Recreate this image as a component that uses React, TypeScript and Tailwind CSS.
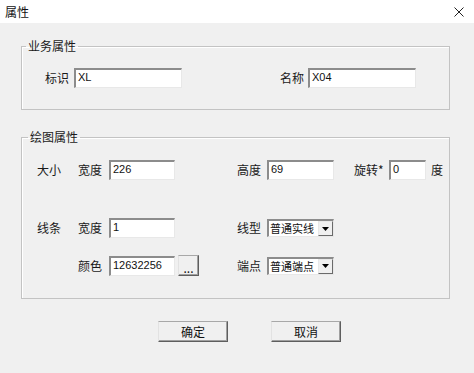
import React from "react";

const cjk = { fontFamily: '"Noto Sans CJK SC", "Microsoft YaHei", sans-serif' };
const lat = { fontFamily: '"Liberation Sans", Arial, sans-serif' };

function Label({ text, w }: { text: string; w: string }) {
  return (
    <div className={`${w} shrink-0 text-[12px] leading-[16px] text-[#1a1a1a]`} style={cjk}>
      {text}
    </div>
  );
}

function Input({ value, w, h = "h-[20px]" }: { value: string; w: string; h?: string }) {
  return (
    <div
      className={`${w} ${h} shrink-0 bg-white border-t-2 border-l-2 border-b border-r border-t-[#8c8c8c] border-l-[#8c8c8c] border-b-[#e8e8e8] border-r-[#e8e8e8] pl-[2px] text-[11px] leading-[15px] text-[#111]`}
      style={lat}
    >
      {value}
    </div>
  );
}

function Select({ value }: { value: string }) {
  return (
    <div className="w-[67px] h-[18px] shrink-0 flex bg-white border-t-2 border-l-2 border-b border-r border-t-[#8c8c8c] border-l-[#8c8c8c] border-b-[#e8e8e8] border-r-[#e8e8e8]">
      <div className="flex-1 min-w-0 pl-[1px] text-[11px] leading-[14px] text-[#111] whitespace-nowrap" style={cjk}>
        {value}
      </div>
      <div className="w-[15px] shrink-0 h-full bg-[#f0f0f0] border-t border-l border-t-[#e8e8e8] border-l-[#e8e8e8] border-b border-r border-b-[#6a6a6a] border-r-[#6a6a6a] flex items-center justify-center">
        <svg width="7" height="4" viewBox="0 0 7 4">
          <path d="M0 0 H7 L3.5 4 Z" fill="#000" />
        </svg>
      </div>
    </div>
  );
}

function Btn({ text, w, h, cls = "" }: { text: string; w: string; h: string; cls?: string }) {
  return (
    <div
      className={`${w} ${h} shrink-0 bg-[#f0f0f0] border border-t-[#a8a8a8] border-l-[#e2e2e2] border-b-[#5e5e5e] border-r-[#5e5e5e] shadow-[inset_-1px_-1px_0_#a0a0a0] flex items-center justify-center text-[12px] text-[#111] ${cls}`}
      style={cjk}
    >
      {text}
    </div>
  );
}

export default function App() {
  return (
    <div className="w-[474px] h-[373px] bg-[#f0f0f0] flex flex-col overflow-hidden">
      {/* title bar */}
      <div className="h-[23px] bg-white flex items-center justify-between pl-[5px] pr-[10px]">
        <div className="text-[12px] leading-[16px] text-[#111]" style={cjk}>
          属性
        </div>
        <svg width="10" height="10" viewBox="0 0 10 10">
          <path d="M0.5 0.5 L9.5 9.5 M9.5 0.5 L0.5 9.5" stroke="#222" strokeWidth="1" />
        </svg>
      </div>

      {/* group 1 */}
      <fieldset className="ml-[21px] mt-[15px] w-[429px] border border-[#c3c3c3] shadow-[inset_1px_1px_0_#ffffff]">
        <legend className="ml-[4px] px-[2px] text-[12px] leading-[16px] text-[#1a1a1a]" style={cjk}>
          业务属性
        </legend>
        <div className="mt-[14px] mb-[21px] pl-[23px] flex items-center h-[20px]">
          <Label text="标识" w="w-[29px]" />
          <Input value="XL" w="w-[108px]" />
          <div className="w-[98px] shrink-0" />
          <Label text="名称" w="w-[28px]" />
          <Input value="X04" w="w-[108px]" />
        </div>
      </fieldset>

      {/* group 2 */}
      <fieldset className="ml-[21px] mt-[19px] w-[429px] border border-[#c3c3c3] shadow-[inset_1px_1px_0_#ffffff]">
        <legend className="ml-[6px] px-[2px] text-[12px] leading-[16px] text-[#1a1a1a]" style={cjk}>
          绘图属性
        </legend>
        <div className="mt-[15px] pl-[15px] flex flex-col">
          <div className="h-[20px] flex items-center">
            <Label text="大小" w="w-[41px]" />
            <Label text="宽度" w="w-[31px]" />
            <Input value="226" w="w-[66px]" />
            <div className="w-[62px] shrink-0" />
            <Label text="高度" w="w-[30px]" />
            <Input value="69" w="w-[67px]" />
            <div className="w-[20px] shrink-0" />
            <Label text="旋转*" w="w-[35px]" />
            <Input value="0" w="w-[37px]" />
            <div className="ml-[5px]">
              <Label text="度" w="w-[14px]" />
            </div>
          </div>
          <div className="h-[20px] mt-[38px] flex items-center">
            <Label text="线条" w="w-[41px]" />
            <Label text="宽度" w="w-[31px]" />
            <Input value="1" w="w-[66px]" />
            <div className="w-[62px] shrink-0" />
            <Label text="线型" w="w-[30px]" />
            <Select value="普通实线" />
          </div>
          <div className="h-[21px] mt-[17px] flex items-center">
            <div className="w-[41px] shrink-0" />
            <Label text="颜色" w="w-[31px]" />
            <Input value="12632256" w="w-[66px]" />
            <Btn text="..." w="w-[21px] ml-[3px]" h="h-[21px]" cls="items-end pb-[2px] leading-[10px]" />
            <div className="w-[38px] shrink-0" />
            <Label text="端点" w="w-[30px]" />
            <Select value="普通端点" />
          </div>
          <div className="h-[22px]" />
        </div>
      </fieldset>

      {/* buttons */}
      <div className="mt-[22px] pl-[158px] flex">
        <Btn text="确定" w="w-[70px]" h="h-[21px]" />
        <div className="w-[43px] shrink-0" />
        <Btn text="取消" w="w-[70px]" h="h-[21px]" />
      </div>
    </div>
  );
}
